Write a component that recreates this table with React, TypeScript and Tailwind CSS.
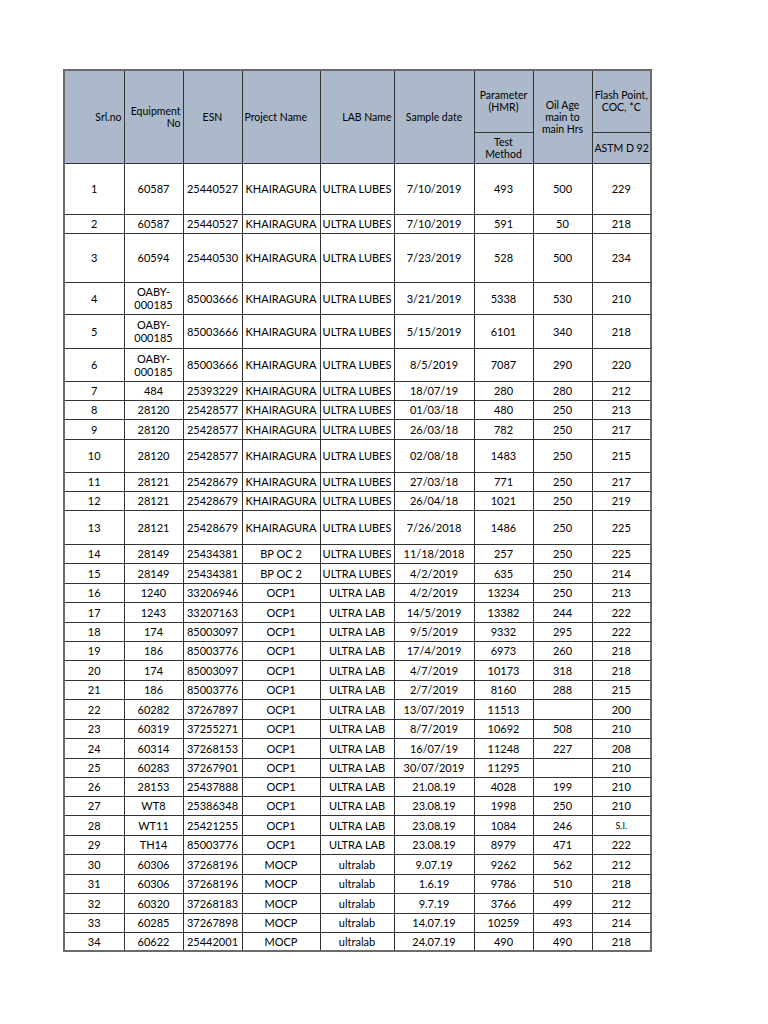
import React from "react";

type Row = { h: string; c: string[] };

const rows: Row[] = [
  { h: "h-[51px]", c: ["1", "60587", "25440527", "KHAIRAGURA", "ULTRA LUBES", "7/10/2019", "493", "500", "229"] },
  { h: "h-[19px]", c: ["2", "60587", "25440527", "KHAIRAGURA", "ULTRA LUBES", "7/10/2019", "591", "50", "218"] },
  { h: "h-[49px]", c: ["3", "60594", "25440530", "KHAIRAGURA", "ULTRA LUBES", "7/23/2019", "528", "500", "234"] },
  { h: "h-[32px]", c: ["4", "OABY-000185", "85003666", "KHAIRAGURA", "ULTRA LUBES", "3/21/2019", "5338", "530", "210"] },
  { h: "h-[34px]", c: ["5", "OABY-000185", "85003666", "KHAIRAGURA", "ULTRA LUBES", "5/15/2019", "6101", "340", "218"] },
  { h: "h-[33px]", c: ["6", "OABY-000185", "85003666", "KHAIRAGURA", "ULTRA LUBES", "8/5/2019", "7087", "290", "220"] },
  { h: "h-[19px]", c: ["7", "484", "25393229", "KHAIRAGURA", "ULTRA LUBES", "18/07/19", "280", "280", "212"] },
  { h: "h-[19px]", c: ["8", "28120", "25428577", "KHAIRAGURA", "ULTRA LUBES", "01/03/18", "480", "250", "213"] },
  { h: "h-[20px]", c: ["9", "28120", "25428577", "KHAIRAGURA", "ULTRA LUBES", "26/03/18", "782", "250", "217"] },
  { h: "h-[33px]", c: ["10", "28120", "25428577", "KHAIRAGURA", "ULTRA LUBES", "02/08/18", "1483", "250", "215"] },
  { h: "h-[19px]", c: ["11", "28121", "25428679", "KHAIRAGURA", "ULTRA LUBES", "27/03/18", "771", "250", "217"] },
  { h: "h-[19px]", c: ["12", "28121", "25428679", "KHAIRAGURA", "ULTRA LUBES", "26/04/18", "1021", "250", "219"] },
  { h: "h-[34px]", c: ["13", "28121", "25428679", "KHAIRAGURA", "ULTRA LUBES", "7/26/2018", "1486", "250", "225"] },
  { h: "h-[19px]", c: ["14", "28149", "25434381", "BP OC 2", "ULTRA LUBES", "11/18/2018", "257", "250", "225"] },
  { h: "h-[20px]", c: ["15", "28149", "25434381", "BP OC 2", "ULTRA LUBES", "4/2/2019", "635", "250", "214"] },
  { h: "h-[19px]", c: ["16", "1240", "33206946", "OCP1", "ULTRA LAB", "4/2/2019", "13234", "250", "213"] },
  { h: "h-[20px]", c: ["17", "1243", "33207163", "OCP1", "ULTRA LAB", "14/5/2019", "13382", "244", "222"] },
  { h: "h-[19px]", c: ["18", "174", "85003097", "OCP1", "ULTRA LAB", "9/5/2019", "9332", "295", "222"] },
  { h: "h-[19px]", c: ["19", "186", "85003776", "OCP1", "ULTRA LAB", "17/4/2019", "6973", "260", "218"] },
  { h: "h-[20px]", c: ["20", "174", "85003097", "OCP1", "ULTRA LAB", "4/7/2019", "10173", "318", "218"] },
  { h: "h-[19px]", c: ["21", "186", "85003776", "OCP1", "ULTRA LAB", "2/7/2019", "8160", "288", "215"] },
  { h: "h-[20px]", c: ["22", "60282", "37267897", "OCP1", "ULTRA LAB", "13/07/2019", "11513", "", "200"] },
  { h: "h-[19px]", c: ["23", "60319", "37255271", "OCP1", "ULTRA LAB", "8/7/2019", "10692", "508", "210"] },
  { h: "h-[20px]", c: ["24", "60314", "37268153", "OCP1", "ULTRA LAB", "16/07/19", "11248", "227", "208"] },
  { h: "h-[19px]", c: ["25", "60283", "37267901", "OCP1", "ULTRA LAB", "30/07/2019", "11295", "", "210"] },
  { h: "h-[19px]", c: ["26", "28153", "25437888", "OCP1", "ULTRA LAB", "21.08.19", "4028", "199", "210"] },
  { h: "h-[19px]", c: ["27", "WT8", "25386348", "OCP1", "ULTRA LAB", "23.08.19", "1998", "250", "210"] },
  { h: "h-[20px]", c: ["28", "WT11", "25421255", "OCP1", "ULTRA LAB", "23.08.19", "1084", "246", "S.I."] },
  { h: "h-[19px]", c: ["29", "TH14", "85003776", "OCP1", "ULTRA LAB", "23.08.19", "8979", "471", "222"] },
  { h: "h-[20px]", c: ["30", "60306", "37268196", "MOCP", "ultralab", "9.07.19", "9262", "562", "212"] },
  { h: "h-[19px]", c: ["31", "60306", "37268196", "MOCP", "ultralab", "1.6.19", "9786", "510", "218"] },
  { h: "h-[20px]", c: ["32", "60320", "37268183", "MOCP", "ultralab", "9.7.19", "3766", "499", "212"] },
  { h: "h-[19px]", c: ["33", "60285", "37267898", "MOCP", "ultralab", "14.07.19", "10259", "493", "214"] },
  { h: "h-[19px]", c: ["34", "60622", "25442001", "MOCP", "ultralab", "24.07.19", "490", "490", "218"] },
];

const cell = "border border-[#333333] text-center align-middle px-0 leading-[13px] whitespace-nowrap overflow-hidden";
const hcell = "border border-[#333333] bg-[#acb9ca] align-middle px-[2px] leading-[12px] text-[10.5px] font-normal whitespace-nowrap";

export default function App() {
  return (
    <div className="min-h-[1024px] w-[768px] bg-white pt-[69px] pl-[63px]" style={{ fontFamily: "Lato, 'Open Sans', sans-serif" }}>
      <table className="table-fixed border-collapse border-2 border-[#6b6b6b] text-[11px] font-normal text-black w-[587px]">
        <colgroup>
          <col className="w-[60px]" />
          <col className="w-[59px]" />
          <col className="w-[59px]" />
          <col className="w-[78px]" />
          <col className="w-[74px]" />
          <col className="w-[80px]" />
          <col className="w-[59px]" />
          <col className="w-[59px]" />
          <col className="w-[59px]" />
        </colgroup>
        <thead>
          <tr className="h-[62px]">
            <th rowSpan={2} className={`${hcell} text-right`}>Srl.no</th>
            <th rowSpan={2} className={`${hcell} text-right`}>Equipment<br />No</th>
            <th rowSpan={2} className={`${hcell} text-center`}>ESN</th>
            <th rowSpan={2} className={`${hcell} text-left`}>Project Name</th>
            <th rowSpan={2} className={`${hcell} text-right`}>LAB Name</th>
            <th rowSpan={2} className={`${hcell} text-center`}>Sample date</th>
            <th className={`${hcell} text-center`}>Parameter<br />(HMR)</th>
            <th rowSpan={2} className={`${hcell} text-center`}>Oil Age<br />main to<br />main Hrs</th>
            <th className={`${hcell} text-center`}>Flash Point,<br />COC, *C</th>
          </tr>
          <tr className="h-[31px]">
            <th className={`${hcell} text-center`}>Test<br />Method</th>
            <th className={`${hcell} text-center`}>ASTM D 92</th>
          </tr>
        </thead>
        <tbody>
          {rows.map((r, i) => (
            <tr key={i} className={r.h}>
              {r.c.map((v, j) => (
                <td key={j} className={cell}>
                  {v === "OABY-000185" ? (
                    <>
                      OABY-
                      <br />
                      000185
                    </>
                  ) : v === "S.I." ? (
                    <span className="text-[9px]">{v}</span>
                  ) : (
                    v
                  )}
                </td>
              ))}
            </tr>
          ))}
        </tbody>
      </table>
    </div>
  );
}
